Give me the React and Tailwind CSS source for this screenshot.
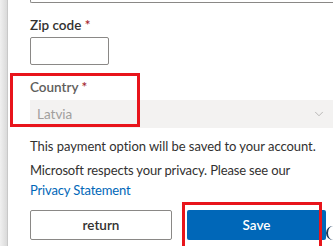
import { ChevronDown } from "lucide-react";

const font = { fontFamily: '"Segoe UI", Lato, "Noto Sans", sans-serif' };

export default function App() {
  return (
    <div
      className="relative h-[246px] w-[333px] overflow-hidden bg-white text-[#323130]"
      style={font}
    >
      <div className="flex h-full">
        {/* left edge of the dialog */}
        <div className="w-[8px] shrink-0 border-r border-[#c8c8c8] bg-gradient-to-r from-[#f0f0f0] to-[#dadada]" />

        <div className="flex-1 pl-[22px]">
          {/* bottom of previous field */}
          <div className="h-[3px] rounded-bl-[2px] border-b border-l border-[#8a8886]" />

          <div className="mt-[13px] text-[13.5px] font-semibold leading-[18px]">
            Zip code <span className="text-[#a4262c]">*</span>
          </div>
          <div className="mt-[3px] h-[28px] w-[79px] rounded-[2px] border border-[#8a8886]" />

          <div className="mt-[13px] text-[13.5px] font-semibold leading-[18px] text-[#605e5c]">
            Country <span className="text-[#a4262c]">*</span>
          </div>
          <div className="mt-[4px] flex h-[28px] items-center justify-between bg-[#f3f2f1] pl-[7px] pr-[7px] text-[13.5px] text-[#a19f9d]">
            <span>Latvia</span>
            <ChevronDown className="h-[14px] w-[14px]" strokeWidth={1.2} />
          </div>

          <p className="mt-[8px] whitespace-nowrap text-[13px] leading-[20px] tracking-[-0.05px]">
            This payment option will be saved to your account.
          </p>
          <p className="mt-[4px] whitespace-nowrap text-[13px] leading-[20px] tracking-[-0.15px]">
            Microsoft respects your privacy. Please see our
            <br />
            <a className="text-[#0067b8]">Privacy Statement</a>
          </p>

          <div className="mt-[10px] flex gap-[15px]">
            <button className="h-[30px] w-[142px] rounded-[2px] border border-[#8a8886] bg-white text-[13.5px] font-semibold text-[#323130]">
              return
            </button>
            <button className="h-[30px] w-[139px] rounded-[2px] bg-[#0067b8] text-[13.5px] font-semibold text-white">
              Save
            </button>
          </div>
        </div>
      </div>

      {/* red highlight boxes */}
      <div className="pointer-events-none absolute left-[10px] top-[73px] h-[54px] w-[130px] border-[3px] border-[#e8141b]" />
      <div className="pointer-events-none absolute left-[182px] top-[202px] h-[50px] w-[140px] border-[3px] border-[#e8141b]" />
      <div className="absolute left-[326px] top-[226px] h-[14px] w-[8px] rounded-l-full border-l-2 border-[#1b3a5c]" />
    </div>
  );
}
